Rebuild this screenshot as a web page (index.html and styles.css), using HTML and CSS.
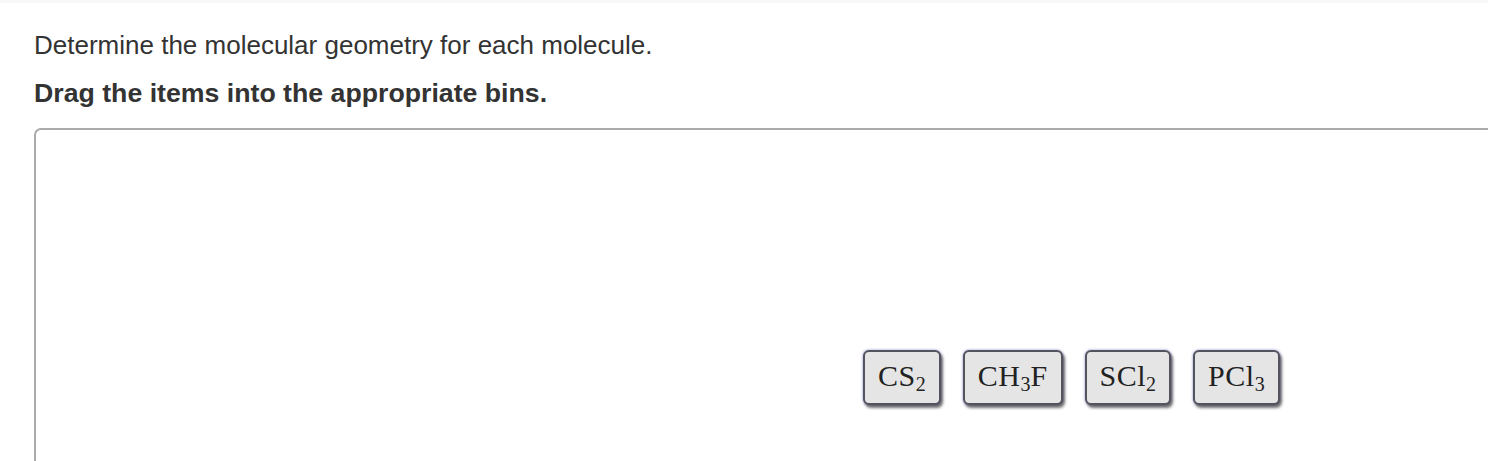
FILE: index.html
```html
<!DOCTYPE html>
<html>
<head>
<meta charset="utf-8">
<link rel="stylesheet" href="styles.css">
</head>
<body>
<div class="strip"></div>
<div class="content">
  <p class="prompt">Determine the molecular geometry for each molecule.</p>
  <p class="instr">Drag the items into the appropriate bins.</p>
  <div class="board">
    <div class="tiles">
      <div class="tile"><span class="f">CS<sub>2</sub></span></div>
      <div class="tile"><span class="f">CH<sub>3</sub>F</span></div>
      <div class="tile"><span class="f">SCl<sub>2</sub></span></div>
      <div class="tile"><span class="f">PCl<sub>3</sub></span></div>
    </div>
  </div>
</div>
</body>
</html>
```

FILE: styles.css
```css
html, body {
  margin: 0;
  padding: 0;
  background: #fff;
  overflow: hidden;
  height: 461px;
}
.strip {
  height: 3px;
  background: #f7f7f7;
}
.content {
  padding: 28px 0 0 34px;
  font-family: "Liberation Sans", Arial, sans-serif;
  color: #333;
}
.prompt {
  margin: 0 0 20px;
  font-size: 26px;
  line-height: 28px;
}
.instr {
  margin: 0 0 21px;
  font-size: 26.7px;
  line-height: 28px;
  font-weight: bold;
}
.board {
  width: 1600px;
  height: 600px;
  border: 2px solid #aaa;
  border-top-left-radius: 7px;
  box-sizing: border-box;
}
.tiles {
  display: flex;
  gap: 22px;
  padding: 220px 0 0 827px;
}
.tile {
  height: 55px;
  box-sizing: border-box;
  padding: 0 13px 0 13px;
  display: flex;
  align-items: center;
  border: 2px solid #54545f;
  border-radius: 6px;
  background: #e5e5e5;
  box-shadow: 2px 3px 3px rgba(0,0,0,0.55), 0 0 2px 1px rgba(140,140,210,0.45);
  font-family: "Liberation Serif", "Times New Roman", serif;
  font-size: 30px;
  color: #222;
}
.f {
  display: block;
  line-height: 30px;
  padding-bottom: 4px;
  letter-spacing: 0.5px;
}
.tile sub {
  font-size: 20px;
  position: relative;
  top: 5px;
  vertical-align: baseline;
  line-height: 0;
  letter-spacing: 0;
}
```
